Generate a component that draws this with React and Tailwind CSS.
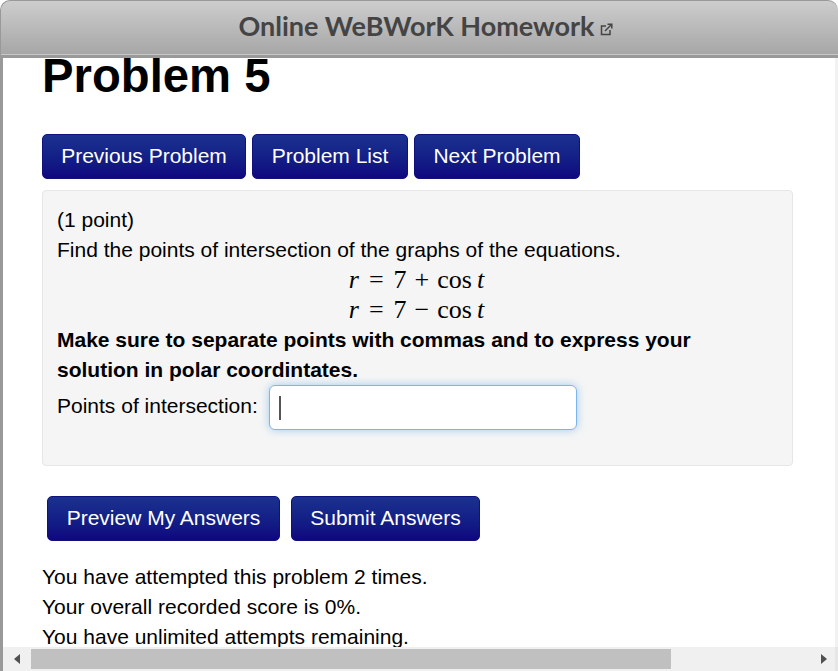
import React from 'react';

const NavButton = ({ children, className = '' }) => (
  <button className={`h-[45px] px-[18px] pb-[2px] rounded-[5px] border border-[#10107f] bg-gradient-to-b from-[#1b318f] to-[#10067f] text-white text-[21px] leading-none whitespace-nowrap ${className}`}>
    {children}
  </button>
);

const MathLine = ({ op }) => (
  <div className="h-[30px] leading-[29px] text-center text-black text-[26px] pr-[2px] font-['Liberation_Serif',serif]">
    <i>r</i>
    <span className="mx-[10px]">=</span>
    <span>7</span>
    <span className="mx-[8px]">{op}</span>
    <span>cos</span>
    <i className="ml-[5px]">t</i>
  </div>
);

const App = () => {
  return (
    <div className="w-[838px] h-[671px] flex flex-col overflow-hidden bg-white text-black font-['Liberation_Sans',sans-serif]">
      {/* Title bar */}
      <div className="h-[58px] shrink-0 rounded-t-[10px] border-t border-l border-[#999] border-b-[3px] border-b-[#999] bg-gradient-to-b from-[#cdcdcd] to-[#a6a6a6] shadow-[inset_0_-1px_0_#c8c8c8] flex items-center justify-center pl-[12px] pb-[4px]">
        <span className="text-[27px] font-bold text-[#444] font-['Lato',sans-serif]">Online WeBWorK Homework</span>
        <svg className="ml-[5px] mt-[6px]" width="13" height="13" viewBox="0 0 13 13" fill="none" stroke="#444" strokeWidth="1.5">
          <path d="M6 3H1.5v8.5H10V7" />
          <path d="M5 8l6-6" />
          <path d="M7.5 1.2h4.3v4.3" />
        </svg>
      </div>

      {/* Page content */}
      <div className="flex-1 min-h-0 overflow-hidden border-l-[3px] border-l-[#999] border-r-[3px] border-r-[#f2f2f2] pl-[39px] pr-[42px]">
        <h1 className="text-[47.25px] leading-[36px] font-bold mb-[40px]">Problem 5</h1>

        <div className="flex gap-[6px]">
          <NavButton className="w-[204px]">Previous Problem</NavButton>
          <NavButton className="w-[156px]">Problem List</NavButton>
          <NavButton className="w-[166px]">Next Problem</NavButton>
        </div>

        <div className="mt-[11px] h-[276px] rounded-[4px] border border-[#e6e6e6] bg-[#f5f5f5] px-[14px] pt-[14px] text-[21px] leading-[30px]">
          <div>(1 point)</div>
          <div>Find the points of intersection of the graphs of the equations.</div>
          <MathLine op="+" />
          <MathLine op="−" />
          <div className="font-bold max-w-[650px]">Make sure to separate points with commas and to express your solution in polar coordintates.</div>
          <div className="flex items-center h-[45px]">
            <span className="w-[200px] -mt-[3px] whitespace-nowrap">Points of intersection:</span>
            <div className="ml-[12px] w-[308px] h-[45px] rounded-[6px] border border-[#7fb5ee] bg-white shadow-[0_0_8px_rgba(102,175,233,0.6)] flex items-center pl-[9px]">
              <div className="w-[2px] h-[24px] bg-[#555]" />
            </div>
          </div>
        </div>

        <div className="flex gap-[11px] mt-[30px] ml-[5px]">
          <NavButton className="w-[233px]">Preview My Answers</NavButton>
          <NavButton className="w-[189px]">Submit Answers</NavButton>
        </div>

        <div className="mt-[21px] text-[21px] leading-[30px]">
          <div>You have attempted this problem 2 times.</div>
          <div>Your overall recorded score is 0%.</div>
          <div>You have unlimited attempts remaining.</div>
        </div>
      </div>

      {/* Horizontal scrollbar */}
      <div className="h-[24px] shrink-0 bg-[#f0f0f0] border-l-[3px] border-l-[#999] border-r-[3px] border-r-[#e6e6e6] flex items-center">
        <div className="w-[28px] flex justify-center">
          <svg width="6" height="10" viewBox="0 0 6 10"><path d="M6 0v10L0 5z" fill="#505050" /></svg>
        </div>
        <div className="w-[640px] h-[20px] bg-[#c0c0c0]" />
        <div className="flex-1 flex justify-end pr-[8px]">
          <svg width="6" height="10" viewBox="0 0 6 10"><path d="M0 0v10l6-5z" fill="#505050" /></svg>
        </div>
      </div>
    </div>
  );
};

export default App;
